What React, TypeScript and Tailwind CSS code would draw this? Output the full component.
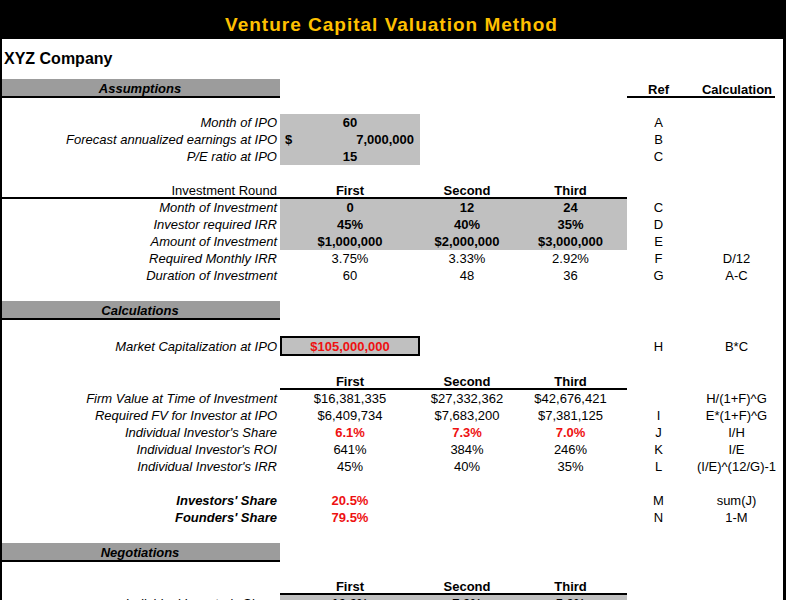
import type { ReactNode } from "react";

const COLS = ["w-[140px]", "w-[94px]", "w-[113px]"];

interface RowProps {
  label?: ReactNode;
  labelClass?: string;
  values?: ReactNode[];
  valueClass?: string;
  shade?: number;
  refId?: string;
  calc?: string;
  height?: string;
  underline?: "none" | "values" | "all";
}

function Row({
  label,
  labelClass = "italic",
  values = [],
  valueClass = "",
  shade = 0,
  refId,
  calc,
  height = "h-[17px]",
  underline = "none",
}: RowProps) {
  const line = "border-b-2 border-black";
  return (
    <div className={`flex ${height}`}>
      <div
        className={`flex w-[278px] items-center justify-end pr-[3px] ${labelClass} ${
          underline === "all" ? line : ""
        }`}
      >
        {label}
      </div>
      {COLS.map((w, i) => (
        <div
          key={w}
          className={`flex ${w} items-center justify-center ${valueClass} ${
            i < shade ? "bg-[#c0c0c0]" : ""
          } ${underline !== "none" ? line : ""}`}
        >
          {values[i]}
        </div>
      ))}
      <div className="flex w-[63px] items-center justify-center">{refId}</div>
      <div className="flex w-[93px] items-center justify-center">{calc}</div>
    </div>
  );
}

function SectionBar({ title, children }: { title: string; children?: ReactNode }) {
  return (
    <div className="flex h-[19px]">
      <div className="flex w-[278px] items-center justify-center border-b-2 border-black bg-[#9c9c9c] pr-[2px] pt-[2px] font-bold italic">
        {title}
      </div>
      <div className="w-[347px]" />
      {children}
    </div>
  );
}

function Blank({ h = "h-[17px]" }: { h?: string }) {
  return <div className={h} />;
}

const red = "font-bold text-[#ee1111]";

export default function App() {
  return (
    <div className="min-h-[600px] w-[791px] bg-white font-['Liberation_Sans',Arial,sans-serif] text-[13px] leading-none text-black">
      <div className="w-[786px] border-r-[3px] border-black">
        <div className="flex h-[39px] items-start justify-center bg-black pt-[15px] text-[19px] font-bold tracking-[1px] text-[#ffc000]">
          Venture Capital Valuation Method
        </div>

        <div className="border-l-2 border-black">
          <div className="flex h-[40px] items-center pl-[2px] text-[16px] font-bold">XYZ Company</div>

          <SectionBar title="Assumptions">
            <div className="flex w-[63px] items-center justify-center border-b-2 border-black pt-[3px] font-bold">
              Ref
            </div>
            <div className="flex w-[85px] items-center justify-center border-b-2 border-black pl-[9px] pt-[3px] font-bold">
              Calculation
            </div>
          </SectionBar>
          <Blank h="h-[16px]" />

          <Row label="Month of IPO" values={["60"]} valueClass="font-bold" shade={1} refId="A" />
          <Row
            label="Forecast annualized earnings at IPO"
            values={[
              <div key="b" className="flex w-full justify-between pl-[5px] pr-[6px]">
                <span>$</span>
                <span>7,000,000</span>
              </div>,
            ]}
            valueClass="font-bold"
            shade={1}
            refId="B"
          />
          <Row label="P/E ratio at IPO" values={["15"]} valueClass="font-bold" shade={1} refId="C" />
          <Blank />

          <Row
            label="Investment Round"
            labelClass="pt-[2px]"
            values={["First", "Second", "Third"]}
            valueClass="font-bold pt-[2px]"
            underline="all"
          />
          <Row label="Month of Investment" values={["0", "12", "24"]} valueClass="font-bold" shade={3} refId="C" />
          <Row label="Investor required IRR" values={["45%", "40%", "35%"]} valueClass="font-bold" shade={3} refId="D" />
          <Row
            label="Amount of Investment"
            values={["$1,000,000", "$2,000,000", "$3,000,000"]}
            valueClass="font-bold"
            shade={3}
            refId="E"
          />
          <Row label="Required Monthly IRR" values={["3.75%", "3.33%", "2.92%"]} refId="F" calc="D/12" />
          <Row label="Duration of Investment" values={["60", "48", "36"]} refId="G" calc="A-C" />
          <Blank />

          <SectionBar title="Calculations" />
          <Blank h="h-[16px]" />

          <Row
            label="Market Capitalization at IPO"
            values={[
              <div
                key="m"
                className="flex h-[20px] w-full items-center justify-center border-2 border-black bg-[#c0c0c0] font-bold text-[#ee1111]"
              >
                $105,000,000
              </div>,
            ]}
            refId="H"
            calc="B*C"
            height="h-[20px]"
          />
          <Blank />

          <Row values={["First", "Second", "Third"]} valueClass="font-bold pt-[2px]" underline="values" />
          <Row
            label="Firm Value at Time of Investment"
            values={["$16,381,335", "$27,332,362", "$42,676,421"]}
            calc="H/(1+F)^G"
          />
          <Row
            label="Required FV for Investor at IPO"
            values={["$6,409,734", "$7,683,200", "$7,381,125"]}
            refId="I"
            calc="E*(1+F)^G"
          />
          <Row
            label="Individual Investor's Share"
            values={["6.1%", "7.3%", "7.0%"]}
            valueClass={red}
            refId="J"
            calc="I/H"
          />
          <Row label="Individual Investor's ROI" values={["641%", "384%", "246%"]} refId="K" calc="I/E" />
          <Row label="Individual Investor's IRR" values={["45%", "40%", "35%"]} refId="L" calc="(I/E)^(12/G)-1" />
          <Blank />

          <Row label="Investors' Share" labelClass="font-bold italic" values={["20.5%"]} valueClass={red} refId="M" calc="sum(J)" />
          <Row label="Founders' Share" labelClass="font-bold italic" values={["79.5%"]} valueClass={red} refId="N" calc="1-M" />
          <Blank />

          <SectionBar title="Negotiations" />
          <Blank h="h-[16px]" />

          <Row values={["First", "Second", "Third"]} valueClass="font-bold pt-[2px]" underline="values" />
          <Row
            label="Individual Investor's Share"
            values={["10.0%", "7.0%", "5.0%"]}
            valueClass="font-bold"
            shade={3}
          />
          <Row label="Individual Investor's ROI" values={["", "", ""]} />
          <Blank />
        </div>
      </div>
    </div>
  );
}
